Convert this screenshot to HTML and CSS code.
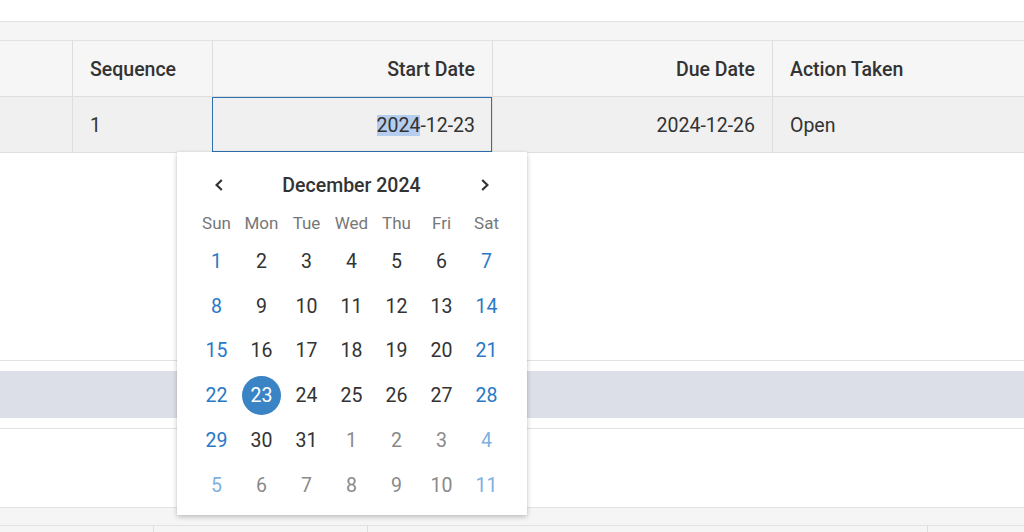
FILE: index.html
```html
<!DOCTYPE html>
<html>
<head>
<meta charset="utf-8">
<link rel="stylesheet" href="styles.css">
</head>
<body>
<div class="page">
  <div class="top-space"></div>
  <div class="toolbar"></div>
  <div class="grid head">
    <div class="cell"></div>
    <div class="cell">Sequence</div>
    <div class="cell right">Start Date</div>
    <div class="cell right">Due Date</div>
    <div class="cell">Action Taken</div>
  </div>
  <div class="grid data">
    <div class="cell"></div>
    <div class="cell">1</div>
    <div class="cell right editing"><span class="sel">2024</span>-12-23</div>
    <div class="cell right">2024-12-26</div>
    <div class="cell">Open</div>
  </div>
  <div class="empty1"></div>
  <div class="section">
    <div class="band"></div>
  </div>
  <div class="empty2"></div>
  <div class="footbar"></div>
  <div class="footgrid">
    <div></div><div></div><div></div><div></div>
  </div>

  <div class="picker">
    <div class="cal-head">
      <span class="nav prev"><svg width="10" height="12" viewBox="0 0 10 12"><path d="M7.8 1 L2.6 6 L7.8 11" fill="none" stroke="#333" stroke-width="2.2"/></svg></span>
      <span class="title">December 2024</span>
      <span class="nav next"><svg width="10" height="12" viewBox="0 0 10 12"><path d="M2.2 1 L7.4 6 L2.2 11" fill="none" stroke="#333" stroke-width="2.2"/></svg></span>
    </div>
    <div class="cal-grid">
      <span class="wd">Sun</span><span class="wd">Mon</span><span class="wd">Tue</span><span class="wd">Wed</span><span class="wd">Thu</span><span class="wd">Fri</span><span class="wd">Sat</span>
      <span class="d we">1</span><span class="d">2</span><span class="d">3</span><span class="d">4</span><span class="d">5</span><span class="d">6</span><span class="d we">7</span>
      <span class="d we">8</span><span class="d">9</span><span class="d">10</span><span class="d">11</span><span class="d">12</span><span class="d">13</span><span class="d we">14</span>
      <span class="d we">15</span><span class="d">16</span><span class="d">17</span><span class="d">18</span><span class="d">19</span><span class="d">20</span><span class="d we">21</span>
      <span class="d we">22</span><span class="d"><span class="selday">23</span></span><span class="d">24</span><span class="d">25</span><span class="d">26</span><span class="d">27</span><span class="d we">28</span>
      <span class="d we">29</span><span class="d">30</span><span class="d">31</span><span class="d out">1</span><span class="d out">2</span><span class="d out">3</span><span class="d we out">4</span>
      <span class="d we out">5</span><span class="d out">6</span><span class="d out">7</span><span class="d out">8</span><span class="d out">9</span><span class="d out">10</span><span class="d we out">11</span>
    </div>
  </div>
</div>
</body>
</html>
```

FILE: styles.css
```css
html, body {
  margin: 0;
  padding: 0;
  background: #fff;
  overflow: hidden;
}
body {
  font-family: Roboto, "Liberation Sans", sans-serif;
  color: #333;
  width: 1024px;
  height: 532px;
}
.page {
  position: relative;
  width: 1024px;
  height: 532px;
  overflow: hidden;
}
.top-space { height: 21px; }
.toolbar {
  height: 18px;
  background: #f5f5f5;
  border-top: 1px solid #e2e2e2;
  border-bottom: 1px solid #e2e2e2;
}
.grid {
  display: grid;
  grid-template-columns: 72px 140px 280px 280px 1fr;
  border-bottom: 1px solid #dedede;
}
.grid .cell {
  box-sizing: border-box;
  border-left: 1px solid #dedede;
  padding: 2px 17px 0 17px;
  display: flex;
  align-items: center;
  font-size: 19.5px;
  white-space: nowrap;
}
.grid .cell:first-child { border-left: none; }
.grid .cell.right { justify-content: flex-end; }
.head { height: 55px; background: #f6f6f6; }
.head .cell { font-weight: 500; color: #333; }
.data { height: 55px; background: #f0f0f0; }
.data .cell { color: #333; }
.data .cell.editing {
  border: 1px solid #2f70b3;
  padding-right: 16px;
  padding-top: 1px;
}
.sel {
  background: #b5cdee;
  line-height: 21px;
  display: inline-block;
}
.empty1 { height: 207px; }
.section {
  border-top: 1px solid #e2e2e2;
  border-bottom: 1px solid #e2e2e2;
  padding: 10px 0;
}
.band { height: 47px; background: #dcdfe7; }
.empty2 { height: 78px; }
.footbar {
  height: 17px;
  background: #f5f5f5;
  border-top: 1px solid #e2e2e2;
  border-bottom: 1px solid #e2e2e2;
}
.footgrid {
  display: grid;
  grid-template-columns: 153px 214px 560px 1fr;
  height: 10px;
  background: #f5f5f5;
}
.footgrid div + div { border-left: 1px solid #dedede; }

.picker {
  position: absolute;
  left: 177px;
  top: 152px;
  width: 350px;
  height: 363px;
  box-sizing: border-box;
  background: #fff;
  box-shadow: 0 2px 5px rgba(0,0,0,0.22), 0 0 2px rgba(0,0,0,0.08);
  padding: 13px 18px 0 17px;
}
.cal-head {
  display: grid;
  grid-template-columns: 45px 225px 45px;
  height: 40px;
  align-items: center;
}
.cal-head .nav {
  display: flex;
  align-items: center;
  justify-content: center;
}
.cal-head .prev { padding-left: 4px; }
.cal-head .next { padding-right: 3px; }
.cal-head .title {
  text-align: center;
  font-size: 19.5px;
  font-weight: 500;
  color: #333;
}
.cal-grid {
  display: grid;
  grid-template-columns: repeat(7, 45px);
  grid-template-rows: 34px repeat(6, 44.8px);
  align-items: center;
  justify-items: center;
}
.wd {
  font-size: 17px;
  color: #777;
  padding-top: 1px;
}
.d {
  font-size: 19.5px;
  color: #333;
  display: flex;
  align-items: center;
  justify-content: center;
  width: 45px;
  height: 44px;
}
.d.we { color: #2a78c6; }
.d.out { color: #8a8a8a; }
.d.we.out { color: #7fb0df; }
.selday {
  display: flex;
  align-items: center;
  justify-content: center;
  width: 39px;
  height: 39px;
  border-radius: 50%;
  background: #3a84c5;
  color: #fff;
}
```
